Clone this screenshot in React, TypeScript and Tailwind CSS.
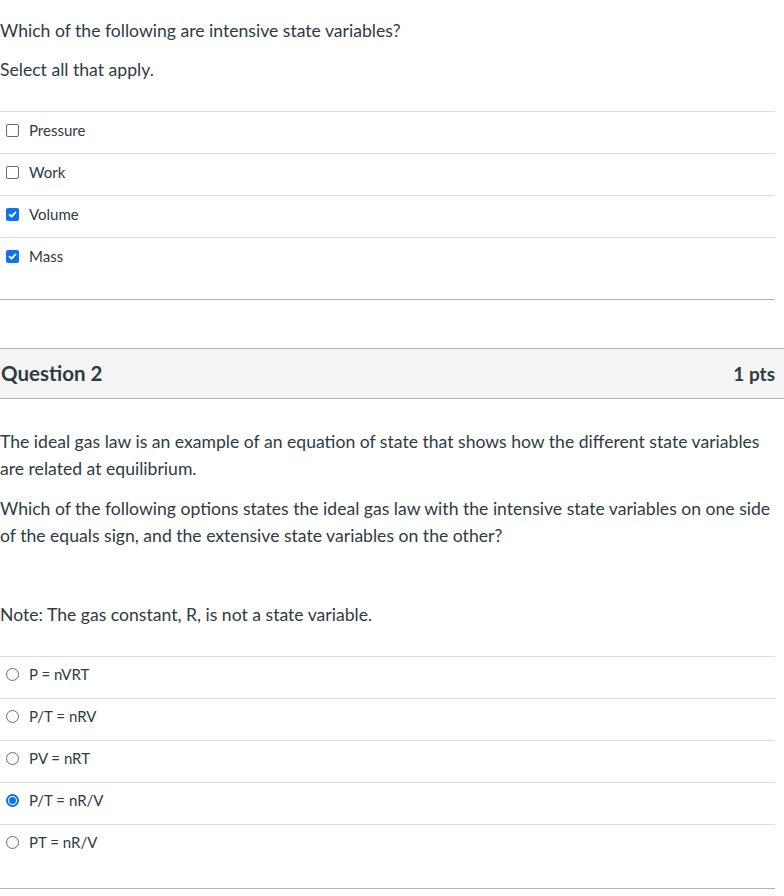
import React from "react";

const Check = ({ checked }: { checked: boolean }) =>
  checked ? (
    <span className="w-[13px] h-[13px] rounded-[2px] bg-[#0b73f0] flex items-center justify-center shrink-0">
      <svg width="9" height="9" viewBox="0 0 10 10">
        <path d="M1.8 5.2 L4 7.3 L8.3 2.6" stroke="white" strokeWidth="2" fill="none" strokeLinecap="round" strokeLinejoin="round" />
      </svg>
    </span>
  ) : (
    <span className="w-[13px] h-[13px] rounded-[2px] border border-[#6b6b6b] bg-white shrink-0" />
  );

const Radio = ({ checked }: { checked: boolean }) =>
  checked ? (
    <span className="w-[13px] h-[13px] rounded-full border-2 border-[#0b73f0] flex items-center justify-center shrink-0">
      <span className="w-[7px] h-[7px] rounded-full bg-[#0b73f0]" />
    </span>
  ) : (
    <span className="w-[13px] h-[13px] rounded-full border border-[#6b6b6b] bg-white shrink-0" />
  );

export default function App() {
  const font = { fontFamily: "Lato, 'Open Sans', sans-serif" };
  const q1 = [
    ["Pressure", false],
    ["Work", false],
    ["Volume", true],
    ["Mass", true],
  ] as const;
  const q2 = [
    ["P = nVRT", false],
    ["P/T = nRV", false],
    ["PV = nRT", false],
    ["P/T = nR/V", true],
    ["PT = nR/V", false],
  ] as const;
  return (
    <div className="w-[784px] h-[896px] bg-white text-[#2d3b45] overflow-hidden" style={font}>
      <div className="pt-[18px] text-[17.6px] leading-[26px]">
        <p>Which of the following are intensive state variables?</p>
        <p className="mt-[13px]">Select all that apply.</p>
      </div>
      <div className="mt-[28px] mr-[9px] border-b border-[#b5b5b5] pb-[20px]">
        {q1.map(([label, c]) => (
          <div key={label} className="h-[42px] border-t border-[#dcdcdc] flex items-center pl-[6px] pb-[4px] gap-[10px] text-[15px]">
            <Check checked={c} />
            <span>{label}</span>
          </div>
        ))}
      </div>
      <div className="mt-[48px] h-[51px] bg-[#f5f5f5] border-y border-[#b5b5b5] flex items-center justify-between pl-[1px] pr-[9px] pb-[1px] leading-none">
        <span className="text-[20.5px] font-bold">Question 2</span>
        <span className="text-[19px] font-bold">1 pts</span>
      </div>
      <div className="pt-[30px] text-[17.6px] leading-[26.5px]">
        <p>The ideal gas law is an example of an equation of state that shows how the different state variables are related at equilibrium.</p>
        <p className="mt-[14px]">Which of the following options states the ideal gas law with the intensive state variables on one side of the equals sign, and the extensive state variables on the other?</p>
        <p className="mt-[53px]">Note: The gas constant, R, is not a state variable.</p>
      </div>
      <div className="mt-[27px] mr-[9px] border-b border-[#b5b5b5] pb-[22px]">
        {q2.map(([label, c]) => (
          <div key={label} className="h-[42px] border-t border-[#dcdcdc] flex items-center pl-[6px] pb-[5px] gap-[10px] text-[15px]">
            <Radio checked={c} />
            <span>{label}</span>
          </div>
        ))}
      </div>
    </div>
  );
}
